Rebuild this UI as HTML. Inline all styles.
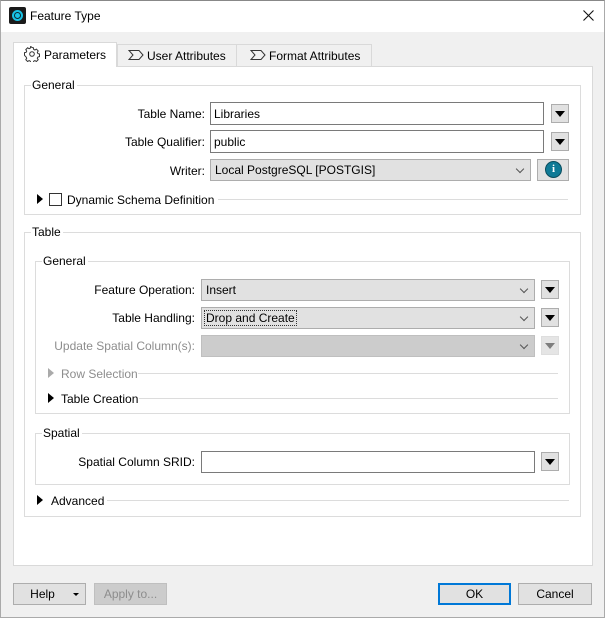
<!DOCTYPE html><html><head><style>
*{box-sizing:border-box;margin:0;padding:0}
body{width:605px;height:618px;position:relative;background:#f0f0f0;font-family:"Liberation Sans",sans-serif;font-size:12px;color:#000;overflow:hidden}
.a{position:absolute}
.t{position:absolute;line-height:14px;white-space:nowrap}
.r{text-align:right}
.grp{position:absolute;border:1px solid #dcdcdc}
.gl{position:absolute;background:#fff;padding:0 2px 0 1px;line-height:14px}
.inp{position:absolute;background:#fff;border:1px solid #7a7a7a;padding-left:3px;line-height:22px}
.cb{position:absolute;background:#e1e1e1;border:1px solid #adadad;padding-left:4px;line-height:21px}
.cb:after{content:"";position:absolute;right:7px;top:6px;width:5px;height:5px;border-right:1px solid #555;border-bottom:1px solid #555;transform:rotate(45deg)}
.dd{position:absolute;width:18px;height:19px;background:#e1e1e1;border:1px solid #adadad}
.dd:after{content:"";position:absolute;left:3px;top:6px;border-left:5px solid transparent;border-right:5px solid transparent;border-top:6px solid #000}
.tri{position:absolute;width:0;height:0;border-top:5px solid transparent;border-bottom:5px solid transparent;border-left:6px solid #000}
.ln{position:absolute;height:1px;background:#dcdcdc}
.btn{position:absolute;height:22px;background:#e1e1e1;border:1px solid #adadad;text-align:center;line-height:20px}
</style></head><body>
<div class="a" style="left:0;top:0;width:605px;height:618px;border:1px solid #aaa;border-top:1px solid #888"></div>
<div class="a" style="left:1px;top:1px;width:603px;height:31px;background:#fff"></div>
<div class="a" style="left:9px;top:7px;width:17px;height:17px;background:#1a1a1a;border-radius:2px"></div>
<div class="a" style="left:12px;top:10px;width:11px;height:11px;border-radius:50%;border:2px solid #19c3e6;background:#0a2a33"></div>
<div class="a" style="left:15px;top:13px;width:5px;height:5px;border-radius:50%;background:#19c3e6"></div>
<div class="t" style="left:30px;top:9px">Feature Type</div>
<svg class="a" style="left:583px;top:10px" width="11" height="11"><path d="M.5.5l10 10M10.5.5l-10 10" stroke="#111" stroke-width="1.1"/></svg>

<div class="a" style="left:13px;top:66px;width:580px;height:500px;background:#fff;border:1px solid #d9d9d9"></div>
<div class="a" style="left:117px;top:44px;width:120px;height:23px;background:#f0f0f0;border:1px solid #d9d9d9"></div>
<div class="a" style="left:236px;top:44px;width:136px;height:23px;background:#f0f0f0;border:1px solid #d9d9d9"></div>
<div class="a" style="left:13px;top:42px;width:104px;height:25px;background:#fff;border:1px solid #d9d9d9;border-bottom:none"></div>
<svg class="a" style="left:24px;top:46px" width="16" height="16" viewBox="0 0 16 16"><path d="M8 1.5l1.3.2.4 1.7 1.2.6 1.5-.9 1.8 1.8-.9 1.5.6 1.2 1.6.4v2.6l-1.6.4-.6 1.2.9 1.5-1.8 1.8-1.5-.9-1.2.6-.4 1.6H6.7l-.4-1.6-1.2-.6-1.5.9-1.8-1.8.9-1.5-.6-1.2L.5 9.3V6.7l1.6-.4.6-1.2-.9-1.5 1.8-1.8 1.5.9 1.2-.6.4-1.7z" fill="none" stroke="#333" stroke-width="1"/><circle cx="8" cy="8" r="2.3" fill="none" stroke="#333"/></svg>
<div class="t" style="left:44px;top:48px">Parameters</div>
<svg class="a" style="left:128px;top:50px" width="16" height="10"><path d="M1 .5h10l4 4.5-4 4.5H1l4-4.5z" fill="none" stroke="#333"/></svg>
<div class="t" style="left:147px;top:49px">User Attributes</div>
<svg class="a" style="left:250px;top:50px" width="16" height="10"><path d="M1 .5h10l4 4.5-4 4.5H1l4-4.5z" fill="none" stroke="#333"/></svg>
<div class="t" style="left:269px;top:49px">Format Attributes</div>

<div class="grp" style="left:24px;top:85px;width:557px;height:130px"></div>
<div class="gl" style="left:31px;top:78px">General</div>
<div class="t r" style="left:60px;width:145px;top:107px">Table Name:</div>
<div class="inp" style="left:210px;top:102px;width:334px;height:23px">Libraries</div>
<div class="dd" style="left:551px;top:104px"></div>
<div class="t r" style="left:60px;width:145px;top:135px">Table Qualifier:</div>
<div class="inp" style="left:210px;top:130px;width:334px;height:23px">public</div>
<div class="dd" style="left:551px;top:132px"></div>
<div class="t r" style="left:60px;width:145px;top:164px">Writer:</div>
<div class="cb" style="left:210px;top:159px;width:321px;height:22px">Local PostgreSQL [POSTGIS]</div>
<div class="a" style="left:537px;top:159px;width:32px;height:22px;background:#e1e1e1;border:1px solid #adadad"></div>
<div class="a" style="left:545px;top:161px;width:17px;height:17px;border-radius:50%;background:#0f7a96;border:1px solid #0a4d5e;color:#fff;font-weight:bold;font-size:11px;text-align:center;line-height:15px;font-family:'Liberation Serif',serif">i</div>
<div class="tri" style="left:37px;top:194px"></div>
<div class="a" style="left:49px;top:193px;width:13px;height:13px;border:1px solid #333;background:#fff"></div>
<div class="t" style="left:67px;top:193px">Dynamic Schema Definition</div>
<div class="ln" style="left:218px;top:199px;width:350px"></div>

<div class="grp" style="left:24px;top:232px;width:557px;height:285px"></div>
<div class="gl" style="left:31px;top:225px">Table</div>
<div class="grp" style="left:35px;top:261px;width:535px;height:153px"></div>
<div class="gl" style="left:42px;top:254px">General</div>
<div class="t r" style="left:40px;width:155px;top:283px">Feature Operation:</div>
<div class="cb" style="left:201px;top:279px;width:334px;height:22px">Insert</div>
<div class="dd" style="left:541px;top:280px"></div>
<div class="t r" style="left:40px;width:155px;top:311px">Table Handling:</div>
<div class="cb" style="left:201px;top:307px;width:334px;height:22px;padding-left:2px;line-height:19px"><span style="border:1px dotted #333;padding:0 1px;line-height:14px;display:inline-block;vertical-align:middle">Drop and Create</span></div>
<div class="dd" style="left:541px;top:308px"></div>
<div class="t r" style="left:40px;width:155px;top:339px;color:#8d8d8d">Update Spatial Column(s):</div>
<div class="cb" style="left:201px;top:335px;width:334px;height:22px;background:#ccc;border-color:#bfbfbf"></div>
<div class="dd" style="left:541px;top:336px;background:#ccc;border-color:#bfbfbf;opacity:.5"></div>
<div class="tri" style="left:48px;top:368px;border-left-color:#aaa"></div>
<div class="t" style="left:61px;top:367px;color:#8d8d8d">Row Selection</div>
<div class="ln" style="left:138px;top:373px;width:420px"></div>
<div class="tri" style="left:48px;top:393px"></div>
<div class="t" style="left:61px;top:392px">Table Creation</div>
<div class="ln" style="left:139px;top:398px;width:419px"></div>

<div class="grp" style="left:35px;top:433px;width:535px;height:52px"></div>
<div class="gl" style="left:42px;top:426px">Spatial</div>
<div class="t r" style="left:40px;width:155px;top:455px">Spatial Column SRID:</div>
<div class="inp" style="left:201px;top:451px;width:334px;height:22px"></div>
<div class="dd" style="left:541px;top:452px"></div>
<div class="tri" style="left:37px;top:495px"></div>
<div class="t" style="left:51px;top:494px">Advanced</div>
<div class="ln" style="left:107px;top:500px;width:462px"></div>

<div class="btn" style="left:13px;top:583px;width:73px;padding-right:14px">Help</div>
<div class="a" style="left:73px;top:593px;border-left:3px solid transparent;border-right:3px solid transparent;border-top:3px solid #000"></div>
<div class="btn" style="left:94px;top:583px;width:73px;background:#ccc;border-color:#bfbfbf;color:#8d8d8d">Apply to...</div>
<div class="btn" style="left:438px;top:583px;width:73px;border:2px solid #0078d7;line-height:18px">OK</div>
<div class="btn" style="left:518px;top:583px;width:74px">Cancel</div>
</body></html>
